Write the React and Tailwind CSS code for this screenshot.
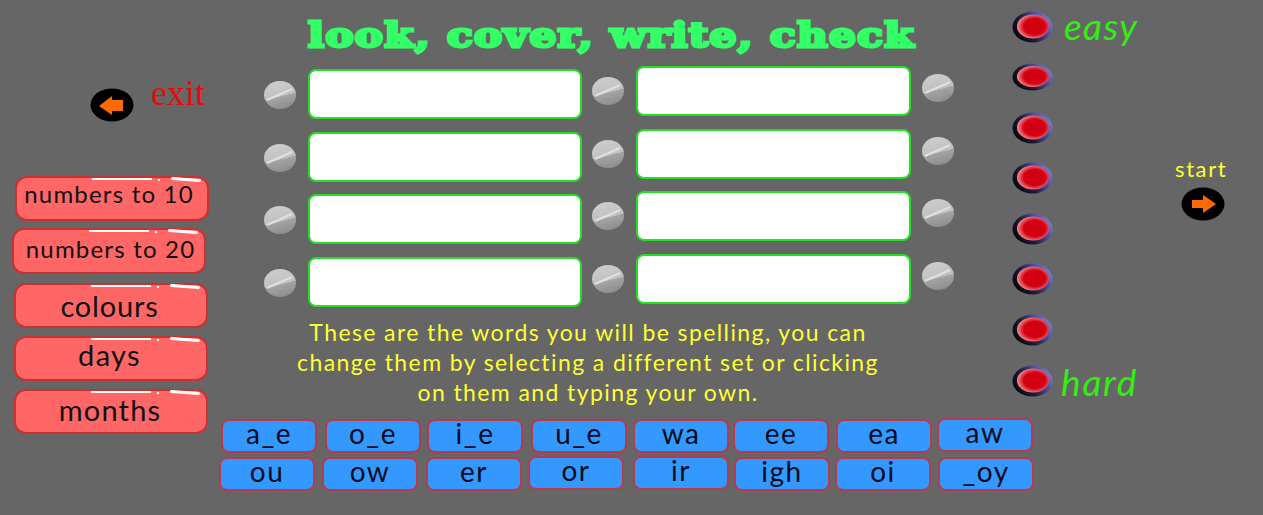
const font = "font-['Lato','Noto_Sans',sans-serif]";

function Pill() {
  return (
    <svg width="34" height="30" viewBox="0 0 34 30" className="block">
      <defs>
        <linearGradient id="pillg" x1="0.35" y1="0" x2="0.65" y2="1">
          <stop offset="0" stopColor="#cdcdcd" />
          <stop offset="0.55" stopColor="#c0c0c0" />
          <stop offset="0.56" stopColor="#a4a4a4" />
          <stop offset="1" stopColor="#8c8c8c" />
        </linearGradient>
      </defs>
      <ellipse cx="17" cy="15" rx="16" ry="14" fill="url(#pillg)" />
      <line x1="4" y1="20" x2="29" y2="9" stroke="#e0e0e0" strokeWidth="2" />
    </svg>
  );
}

function Radio({ h = 32 }) {
  return (
    <svg width="42" height={h} viewBox="0 0 42 32" preserveAspectRatio="none" className="block">
      <defs>
        <linearGradient id="rimg" x1="0" y1="0.7" x2="1" y2="0.2">
          <stop offset="0" stopColor="#05050c" />
          <stop offset="0.35" stopColor="#1c1c38" />
          <stop offset="0.7" stopColor="#4a52a0" />
          <stop offset="1" stopColor="#7f8ad8" />
        </linearGradient>
        <radialGradient id="redg" cx="0.55" cy="0.5" r="0.56">
          <stop offset="0" stopColor="#d20010" />
          <stop offset="0.6" stopColor="#d20010" />
          <stop offset="0.92" stopColor="#f27a82" />
          <stop offset="1" stopColor="#f59aa0" />
        </radialGradient>
      </defs>
      <ellipse cx="20.5" cy="16" rx="20" ry="15.5" fill="url(#rimg)" />
      <ellipse cx="21" cy="15.5" rx="16" ry="12" fill="url(#redg)" />
    </svg>
  );
}

function Arrow({ dir }) {
  return (
    <svg width="44" height="34" viewBox="0 0 44 34" className="block">
      <ellipse cx="22" cy="17" rx="21.5" ry="16.5" fill="#000" />
      <path
        d={dir === "left"
          ? "M9 18 L22 8 L22 12 L33 12 L33 23 L22 23 L22 27 Z"
          : "M35 17 L22 8 L22 13 L11 13 L11 21 L22 21 L22 26 Z"}
        fill="#ff6a00"
      />
    </svg>
  );
}

function RedButton({ label, cls, textCls }) {
  return (
    <button className={`relative block h-[45px] w-[194px] rounded-[12px] border-2 border-[#c83232] bg-[#ff6666] text-[#111] ${font} ${cls}`}>
      <span className={`block text-center ${textCls}`}>{label}</span>
      <span className="absolute left-[75px] top-0 h-[2px] w-[60px] bg-white" />
      <span className="absolute left-[141px] top-[1px] h-[2px] w-[2px] bg-white" />
      <span className="absolute left-[154px] top-0 h-[3px] w-[30px] rotate-[4deg] rounded-full bg-white" />
    </button>
  );
}

function WordBox({ cls }) {
  return <div className={`h-[50px] rounded-[8px] border-2 border-[#22e022] bg-white ${cls}`} />;
}

function Key({ label, cls = "" }) {
  return (
    <div className={`flex h-[34px] w-[96px] shrink-0 items-center justify-center rounded-[8px] border-2 border-[#b83a4e] bg-[#3399ff] text-[28px] leading-none tracking-[1.5px] text-[#0a0a1e] ${font} ${cls}`}>
      <span className="-mt-[6px]">{label}</span>
    </div>
  );
}

function PillCol({ cls }) {
  return (
    <div className={`flex w-[34px] flex-col gap-[32.67px] ${cls}`}>
      <Pill /><Pill /><Pill /><Pill />
    </div>
  );
}

export default function App() {
  return (
    <div className="flex h-[515px] w-[1263px] overflow-hidden bg-[#666666]">
      <div className="flex w-[219px] shrink-0 flex-col">
        <div className="mt-[73px] flex items-start pl-[90px]">
          <div className="mt-[15px]"><Arrow dir="left" /></div>
          <span className="ml-[17px] font-['Liberation_Serif',serif] text-[36px] leading-[40px] text-[#e60b0b]">exit</span>
        </div>
        <RedButton label="numbers to 10" cls="ml-[15px] mt-[54px]" textCls="text-[24px] leading-[36px] -mt-[10px] tracking-[1.2px] pr-[6px]" />
        <RedButton label="numbers to 20" cls="ml-[12px] mt-[7px] h-[46px]" textCls="text-[24px] leading-[36px] -mt-[4px] tracking-[1.2px] pl-[3px]" />
        <RedButton label="colours" cls="ml-[14px] mt-[9px]" textCls="text-[29px] leading-[38px] mt-0 tracking-[0.8px] pr-[3px]" />
        <RedButton label="days" cls="ml-[14px] mt-[8px]" textCls="text-[29px] leading-[38px] -mt-[7px] tracking-[1.3px] pr-[3px]" />
        <RedButton label="months" cls="ml-[14px] mt-[8px]" textCls="text-[29px] leading-[38px] -mt-[4px] tracking-[1.2px] pr-[2px]" />
      </div>

      <div className="flex flex-1 flex-col">
        <div className="flex h-[417px]">
          <div className="flex w-[793px] shrink-0 flex-col">
            <h1 className="mt-[13px] ml-[89px] origin-left scale-x-[1.24] whitespace-nowrap font-['DejaVu_Serif',serif] text-[34px] font-bold leading-[44px] tracking-[1.1px] text-[#33ff66] [-webkit-text-stroke:3px_#33ff66]">
              look, cover, write, check
            </h1>
            <div className="flex">
              <PillCol cls="ml-[44px] mt-[23px]" />
              <div className="ml-[11px] mt-[12px] flex w-[274px] flex-col gap-[12.67px]">
                <WordBox /><WordBox /><WordBox /><WordBox />
              </div>
              <PillCol cls="ml-[9px] mt-[19px]" />
              <div className="ml-[11px] mt-[9px] flex w-[275px] flex-col gap-[12.67px]">
                <WordBox /><WordBox /><WordBox /><WordBox />
              </div>
              <PillCol cls="ml-[10px] mt-[16px]" />
            </div>
            <p className={`mt-[10px] w-[738px] whitespace-nowrap text-center text-[23px] leading-[30px] tracking-[1.4px] text-[#ffff33] ${font}`}>
              These are the words you will be spelling, you can<br />
              change them by selecting a different set or clicking<br />
              on them and typing your own.
            </p>
          </div>

          <div className={`flex w-[163px] shrink-0 flex-col ${font}`}>
            <div className="mt-[11px] flex h-[32px] items-center">
              <Radio />
              <span className="ml-[10px] -mt-[3px] text-[37px] italic leading-none tracking-[1.4px] text-[#33ee11]">easy</span>
            </div>
            <div className="mt-[20px]"><Radio h={28} /></div>
            <div className="mt-[21px]"><Radio /></div>
            <div className="mt-[18px]"><Radio /></div>
            <div className="mt-[19px]"><Radio /></div>
            <div className="mt-[18px]"><Radio /></div>
            <div className="mt-[19px]"><Radio /></div>
            <div className="mt-[19px] flex h-[32px] items-center">
              <Radio />
              <span className="ml-[7px] text-[37px] italic leading-none tracking-[1.8px] text-[#33ee11]">hard</span>
            </div>
          </div>

          <div className={`mt-[155px] flex flex-col items-start pl-[6px] ${font}`}>
            <span className="-ml-[6px] h-[32px] text-[22px] leading-[28px] tracking-[1.6px] text-[#ffff33]">start</span>
            <Arrow dir="right" />
          </div>
        </div>

        <div className="flex h-[35px] items-start pt-[2px]">
          <Key label="a_e" cls="ml-[2px]" />
          <Key label="o_e" cls="ml-[8px]" />
          <Key label="i_e" cls="ml-[6px]" />
          <Key label="u_e" cls="ml-[8px]" />
          <Key label="wa" cls="ml-[6px]" />
          <Key label="ee" cls="ml-[4px]" />
          <Key label="ea" cls="ml-[7px]" />
          <Key label="aw" cls="ml-[5px] -mt-[1px]" />
        </div>
        <div className="mt-[5px] flex items-start">
          <Key label="ou" />
          <Key label="ow" cls="ml-[7px]" />
          <Key label="er" cls="ml-[8px]" />
          <Key label="or" cls="ml-[6px] -mt-[1px]" />
          <Key label="ir" cls="ml-[9px] -mt-[1px]" />
          <Key label="igh" cls="ml-[5px]" />
          <Key label="oi" cls="ml-[5px]" />
          <Key label="_oy" cls="ml-[7px]" />
        </div>
      </div>
    </div>
  );
}
